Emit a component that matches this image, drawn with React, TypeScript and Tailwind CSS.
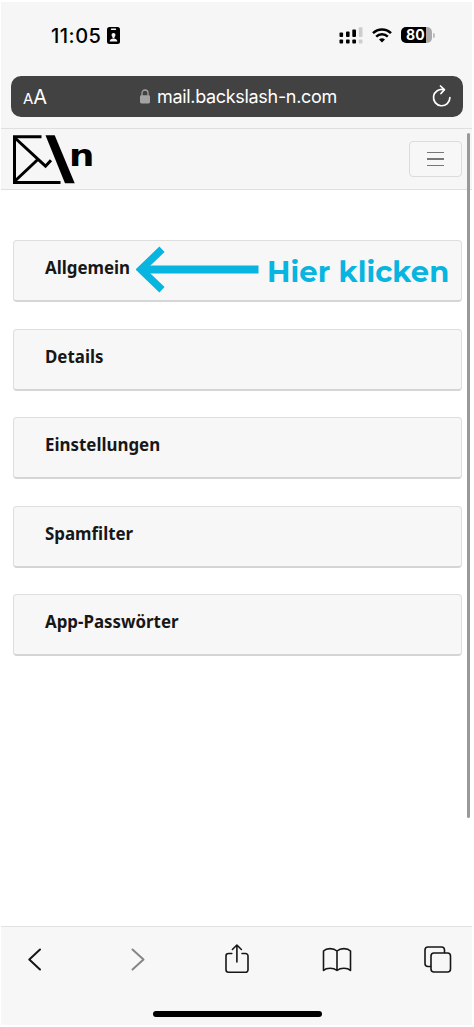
import type { ReactNode } from "react";

const sections = ["Allgemein", "Details", "Einstellungen", "Spamfilter", "App-Passwörter"];

function StatusBar() {
  return (
    <div className="flex h-[74px] items-start justify-between pl-[50px] pr-[37px] pt-[20px] text-black">
      <div className="flex items-center gap-[5px]">
        <span className="w-[51px] whitespace-nowrap pt-px font-['Inter',sans-serif] text-[20px] font-medium leading-[26px] tracking-[0.5px]">
          11:05
        </span>
        <svg width="13" height="17" viewBox="0 0 13 17">
          <rect width="13" height="17" rx="2.5" fill="#000" />
          <rect x="3.8" y="1.6" width="5.4" height="1.3" rx="0.6" fill="#f6f6f6" />
          <circle cx="6.5" cy="8" r="2" fill="#f6f6f6" />
          <path d="M5.5 9h2v2.2h-2z" fill="#f6f6f6" />
          <path d="M2.7 14.6c0-2.3 1.7-3.1 3.8-3.1s3.8.8 3.8 3.1z" fill="#f6f6f6" />
        </svg>
      </div>
      <div className="flex h-[26px] items-center">
        <svg width="24" height="17" viewBox="0 0 24 17" className="mr-[9px]">
          <g fill="#000">
            <rect x="0.5" y="5.5" width="3.6" height="4.5" rx="0.9" />
            <rect x="7" y="4.5" width="3.6" height="5.5" rx="0.9" />
            <rect x="13.3" y="2.5" width="3.7" height="7.5" rx="0.9" />
            <rect x="0.5" y="12.5" width="3.6" height="4" rx="0.9" />
            <rect x="7" y="12.5" width="3.6" height="4" rx="0.9" />
            <rect x="13.3" y="12.5" width="3.7" height="4" rx="0.9" />
          </g>
          <g fill="#cdcdcd">
            <rect x="19.8" y="0.3" width="3.7" height="9.7" rx="0.9" />
            <rect x="19.8" y="12.5" width="3.7" height="4" rx="0.9" />
          </g>
        </svg>
        <svg width="20" height="15" viewBox="0 0 20 15" className="mr-[9px]" fill="none" stroke="#000">
          <path d="M1 5.2a12.8 12.8 0 0 1 18 0" strokeWidth="2.5" />
          <path d="M4.2 8.7a8.2 8.2 0 0 1 11.6 0" strokeWidth="2.4" />
          <path d="M10 14.6 7 11.6a4.3 4.3 0 0 1 6 0z" fill="#000" stroke="none" />
        </svg>
        <div className="flex items-center">
          <div className="flex h-[16px] w-[31px] items-center overflow-hidden rounded-[5px] bg-[linear-gradient(to_right,#000_80%,#ababab_80%)] pl-[5px] font-['Inter',sans-serif] text-[14px] font-bold leading-none tracking-[0.1px] text-white">
            80
          </div>
          <div className="ml-px h-[5px] w-[2px] rounded-r-full bg-[#bdbdbd]" />
        </div>
      </div>
    </div>
  );
}

function AddressBar() {
  return (
    <div className="ml-[10px] flex h-[41px] w-[452px] items-center rounded-[10px] bg-[#424242] pl-[12px] font-['Inter',sans-serif] text-white">
      <div className="flex w-[117px] items-baseline leading-none">
        <span className="text-[15px]">A</span>
        <span className="text-[20px]">A</span>
      </div>
      <svg width="10" height="15" viewBox="0 0 10 15" className="mr-[7px]">
        <path d="M2 7V4a3 3 0 0 1 6 0v3" fill="none" stroke="#a3a3a3" strokeWidth="1.3" />
        <rect y="6.3" width="10" height="8.2" rx="1.4" fill="#a3a3a3" />
      </svg>
      <span className="w-[275px] whitespace-nowrap text-[18px] leading-[24px] tracking-[-0.32px]">mail.backslash-n.com</span>
      <svg width="20" height="24" viewBox="0 0 20 24" fill="none" stroke="#fff" strokeWidth="1.7" strokeLinecap="round" strokeLinejoin="round">
        <path d="M11.7 4.6A8.2 8.2 0 1 0 17.9 12.5" />
        <path d="M8.5 1 12.4 4.6 9 8.5" />
      </svg>
    </div>
  );
}

function SiteHeader() {
  return (
    <header className="flex h-[62px] items-center justify-between border-y border-[#dfdfdf] bg-[#f6f6f6] pl-[12px] pr-[10.5px]">
      <div className="flex items-start">
        <svg width="63" height="49" viewBox="0 0 63 49" className="shrink-0">
          <g fill="none" stroke="#000" strokeWidth="3">
            <path d="M28.5 1.8H1.5v45.7h46" />
            <path d="M2 3 32.5 31.2 38 25.3" />
            <path d="M24.8 24.5 2.5 45.5" />
          </g>
          <path d="M32.5.3h9.2l20 48H52z" fill="#000" />
        </svg>
        <span className="-ml-[7px] mt-[4px] origin-left scale-x-[1.15] font-['DejaVu_Sans',sans-serif] text-[31px] font-bold leading-[32px] text-black">n</span>
      </div>
      <div className="flex h-[36px] w-[53px] flex-col items-center justify-center gap-[5px] rounded-[4px] border border-[#dcdcdc] bg-[#f7f7f7]">
        <span className="h-[1.5px] w-[17px] bg-[#777]" />
        <span className="h-[1.5px] w-[17px] bg-[#777]" />
        <span className="h-[1.5px] w-[17px] bg-[#777]" />
      </div>
    </header>
  );
}

function Pointer() {
  return (
    <div className="absolute left-[122px] top-[4px] flex items-start text-[#08b4e0]">
      <svg width="123" height="48" viewBox="0 0 123 48" fill="none" stroke="currentColor">
        <path d="M26 4.300 4.800 24.500 26 44.700" strokeWidth="7.5" />
        <path d="M6 24.500h116.500" strokeWidth="8" />
      </svg>
      <span className="ml-[8px] mt-[10px] whitespace-nowrap font-['Montserrat','Inter',sans-serif] text-[29px] font-bold leading-[34px] tracking-[0.08px]">
        Hier klicken
      </span>
    </div>
  );
}

function ToolIcon({ children, color = "#161616" }: { children: ReactNode; color?: string }) {
  return (
    <svg width="30" height="32" viewBox="0 0 30 32" fill="none" stroke={color} strokeWidth="1.6" strokeLinecap="round" strokeLinejoin="round">
      {children}
    </svg>
  );
}

function Toolbar() {
  return (
    <nav className="h-[99px] border-t border-[#e2e2e2] bg-[#f7f7f8] pt-[15px]">
      <div className="flex justify-between pl-[19px] pr-[19px]">
        <ToolIcon><path d="M20 7.500 9.300 17.500 20 27.500" strokeWidth="2" /></ToolIcon>
        <ToolIcon color="#858585"><path d="M11.500 7.500 22.500 17.500 11.500 27.500" strokeWidth="2" /></ToolIcon>
        <ToolIcon>
          <path d="M9.800 11.500H6.500A2.500 2.500 0 0 0 4 14v13.800A2.500 2.500 0 0 0 6.500 30.300h17a2.500 2.500 0 0 0 2.500-2.500V14a2.500 2.500 0 0 0-2.500-2.500H20" />
          <path d="M14.900 20V3M10.400 7.500 14.900 3l4.500 4.500" />
        </ToolIcon>
        <ToolIcon>
          <path d="M15 9C11.500 5.800 4.500 5.800 1.500 9V28.500c3-3 10-3 13.500 0 3.500-3 10.500-3 13.500 0V9C25.500 5.800 18.500 5.800 15 9zV28.500" />
        </ToolIcon>
        <ToolIcon>
          <path d="M7.500 24.500H5a3 3 0 0 1-3-3V8a3 3 0 0 1 3-3h13.500a3 3 0 0 1 3 3V10.500" />
          <rect x="8" y="11" width="19.500" height="19" rx="3" />
        </ToolIcon>
      </div>
      <div className="ml-[152px] mt-[37px] h-[6px] w-[169px] rounded-full bg-black" />
    </nav>
  );
}

export default function App() {
  return (
    <div className="relative flex h-[1027px] w-[474px] flex-col overflow-hidden bg-white pb-[2px] pl-px pr-[2px] pt-[2px]">
      <div className="bg-[#f6f6f6]">
        <StatusBar />
        <AddressBar />
        <div className="h-[11px]" />
      </div>
      <SiteHeader />
      <main className="flex flex-1 flex-col gap-[26.6px] pl-[12px] pr-[10px] pt-[50px]">
        {sections.map((label, index) => (
          <section
            key={label}
            className="relative h-[62px] rounded-[4px] border border-b-2 border-[#dedede] border-b-[#d5d5d5] bg-[#f7f7f7] pl-[31px] pt-[14px] font-['Noto_Sans',sans-serif] text-[16.9px] font-bold leading-[26px] text-[#171717]"
          >
            {label}
            {index === 0 && <Pointer />}
          </section>
        ))}
      </main>
      <Toolbar />
      <div className="absolute left-[467px] top-[133px] h-[685px] w-[3px] rounded-full bg-[#999]" />
    </div>
  );
}
